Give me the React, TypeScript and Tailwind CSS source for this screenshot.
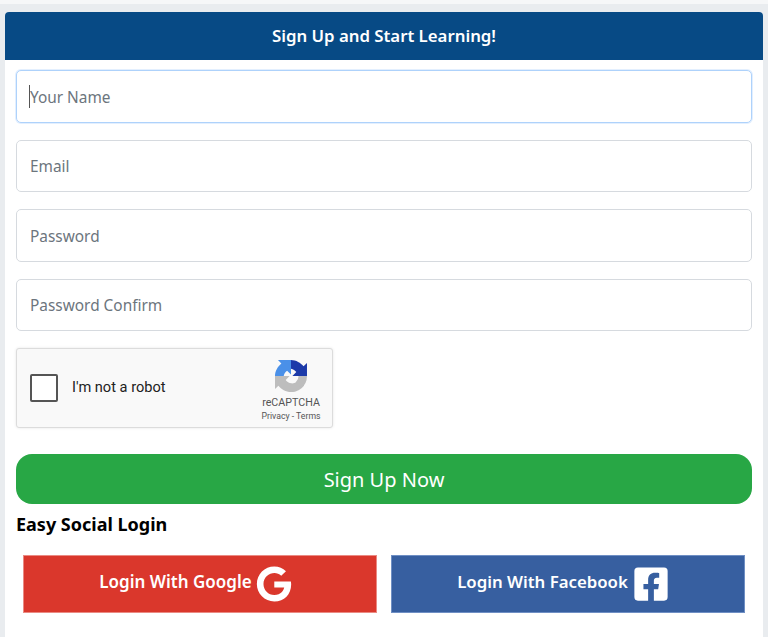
import { FaGoogle, FaFacebookSquare } from "react-icons/fa";

function Field({ label, focused }: { label: string; focused?: boolean }) {
  return (
    <div
      className={`relative flex h-[52.5px] items-center rounded-[5px] border bg-white pl-[13px] pt-[2px] text-[15.4px] text-[#6c757d] ${
        focused ? "border-[#aed2fb] shadow-[0_0_0_1px_#e3effe]" : "border-[#d6dadf]"
      }`}
    >
      {focused && <span className="absolute left-[12px] top-[14px] h-[23px] w-px bg-[#555]" />}
      {label}
    </div>
  );
}

const ARROW =
  "M64 31.955l-.033-1.37V5.9l-6.817 6.82C51.53 5.88 42.26 0 31.9 0 21.08 0 11.5 5.44 5.77 13.73l11.18 11.3a15.4 15.4 0 0 1 4.53-5.08c1.95-1.52 4.72-2.77 8.6-2.77.47 0 .83.055 1.1.16 4.8.38 8.97 3.03 11.43 6.87l-7.91 7.91c10.02-.04 21.34-.04 26.8.03";

function RecaptchaLogo() {
  return (
    <svg width="32" height="32" viewBox="0 0 64 64" className="block">
      <defs>
        <clipPath id="rc-tr">
          <rect x="32" y="0" width="32" height="32" />
        </clipPath>
        <clipPath id="rc-tl">
          <rect x="0" y="0" width="32" height="32" />
        </clipPath>
        <clipPath id="rc-b">
          <rect x="0" y="32" width="64" height="32" />
        </clipPath>
      </defs>
      <g clipPath="url(#rc-b)">
        <path d={ARROW} fill="#bdbdbd" transform="rotate(180 32 32)" />
        <path d="M64 32 A32 32 0 0 1 52 57 L42 44 A16 16 0 0 0 47 32 Z" fill="#bdbdbd" />
      </g>
      <g clipPath="url(#rc-tl)">
        <path d={ARROW} fill="#4a90e8" transform="rotate(-90 32 32)" />
      </g>
      <g clipPath="url(#rc-tr)">
        <path d={ARROW} fill="#1c3aa9" />
      </g>
    </svg>
  );
}

export default function App() {
  return (
    <div className="h-[637px] w-[768px] overflow-hidden bg-[#e9ecef] px-[5px] font-['Noto_Sans','Open_Sans',sans-serif]">
      <div className="-mx-[5px] h-[4px] bg-[#f6f7f8]" />
      <div className="mt-[8px] h-[625px] w-[758px] overflow-hidden rounded-t-[4px] bg-white">
        <div className="flex h-[48px] items-center justify-center bg-[#074a85] text-[16.8px] font-semibold text-white">
          Sign Up and Start Learning!
        </div>
        <div className="px-[11px] pt-[10px]">
          <div className="flex flex-col gap-[17px]">
            <Field label="Your Name" focused />
            <Field label="Email" />
            <Field label="Password" />
            <Field label="Password Confirm" />
          </div>
          <div className="mt-[16.5px] flex h-[80px] w-[317px] items-center rounded-[3px] border border-[#dcdcdc] bg-[#f9f9f9] pl-[13px] pr-[12px] font-['Roboto',sans-serif] shadow-[0_0_3px_rgba(0,0,0,0.1)]">
            <div className="h-[28px] w-[28px] rounded-[2px] border-2 border-[#555] bg-white" />
            <div className="ml-[14px] flex-1 text-[14.6px] text-[#222]">I'm not a robot</div>
            <div className="-mr-[1px] flex w-[60px] flex-col items-center pt-[5px]">
              <RecaptchaLogo />
              <div className="mt-[5px] whitespace-nowrap text-[10.7px] leading-[12px] text-[#555]">reCAPTCHA</div>
              <div className="mt-[2px] whitespace-nowrap text-[8.7px] leading-[10px] text-[#555]">Privacy - Terms</div>
            </div>
          </div>
          <div className="mt-[26.5px] flex h-[50px] items-center justify-center rounded-[16px] bg-[#28a745] pt-[2px] text-[20px] text-white">
            Sign Up Now
          </div>
          <div className="mt-[7px] text-[18px] font-bold leading-[27px] text-black">Easy Social Login</div>
          <div className="mt-[17px] grid grid-cols-2 gap-[14px] px-[7px]">
            <div className="flex h-[58px] items-center justify-center gap-[4px] border border-[#ea8a83] bg-[#da372c] pr-[9px] text-[17px] font-semibold text-white">
              <span className="mb-[5px]">Login With Google</span>
              <FaGoogle className="text-[36px]" />
            </div>
            <div className="flex h-[58px] items-center justify-center gap-[4px] border border-[#6f8fc4] bg-[#375fa0] pr-[9px] text-[16.8px] font-semibold text-white">
              <span className="mb-[5px]">Login With Facebook</span>
              <FaFacebookSquare className="text-[38px]" />
            </div>
          </div>
        </div>
      </div>
    </div>
  );
}
